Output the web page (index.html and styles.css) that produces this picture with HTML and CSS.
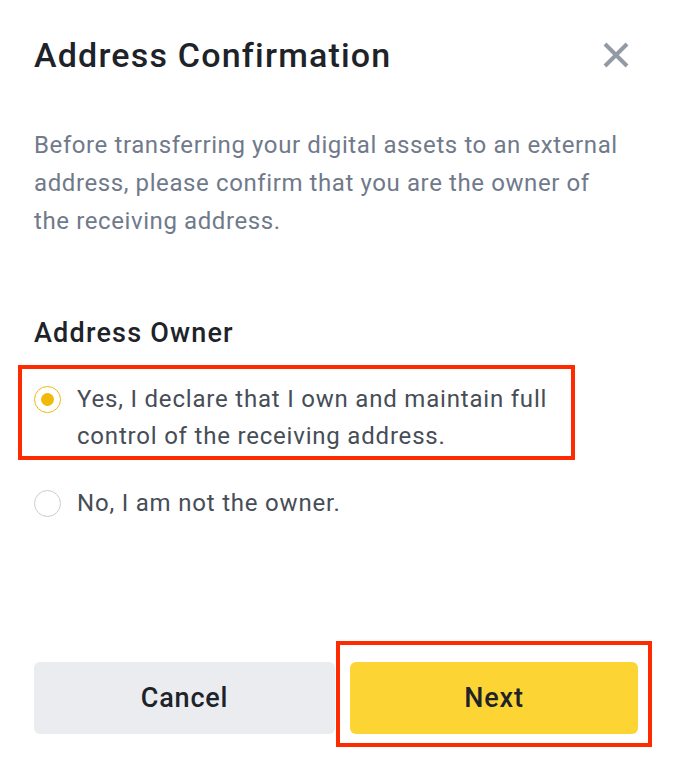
FILE: index.html
```html
<!DOCTYPE html>
<html lang="en">
<head>
<meta charset="utf-8">
<title>Address Confirmation</title>
<link rel="stylesheet" href="styles.css">
</head>
<body>
<div class="dialog">
  <div class="header">
    <h1 class="title">Address Confirmation</h1>
    <button class="close" aria-label="Close">
      <svg width="26" height="26" viewBox="0 0 26 26"><path d="M2 2 L24 24 M24 2 L2 24" stroke="#929AA5" stroke-width="4" fill="none"/></svg>
    </button>
  </div>
  <p class="desc">Before transferring your digital assets to an external address, please confirm that you are the owner of the receiving address.</p>
  <h2 class="section">Address Owner</h2>
  <div class="options">
    <label class="option selected">
      <span class="radio"><span class="dot"></span></span>
      <span class="option-text">Yes, I declare that I own and maintain full control of the receiving address.</span>
      <span class="mark mark-option"></span>
    </label>
    <label class="option">
      <span class="radio"></span>
      <span class="option-text">No, I am not the owner.</span>
    </label>
  </div>
  <div class="actions">
    <button class="btn btn-cancel">Cancel</button>
    <div class="next-wrap">
      <button class="btn btn-next">Next</button>
      <span class="mark mark-next"></span>
    </div>
  </div>
</div>
</body>
</html>
```
FILE: styles.css
```css
* { box-sizing: border-box; }
html, body { margin: 0; padding: 0; background: #fff; }
body { font-family: Roboto, "Noto Sans", Arial, sans-serif; color: #1E2329; }
.dialog { width: 678px; min-height: 768px; padding: 35px 40px 0 34px; }
.header { display: flex; justify-content: space-between; align-items: center; height: 40px; }
.title { margin: 0; font-size: 34px; font-weight: 500; line-height: 40px; letter-spacing: 1.2px; color: #1E2329; }
.close { border: 0; background: none; padding: 0; width: 26px; height: 26px; margin-right: 9px; display: flex; }
.desc { margin: 51px 0 0; font-size: 24px; line-height: 38px; letter-spacing: 0.6px; color: #707A8A; width: 590px; }
.section { margin: 76px 0 0; font-size: 27px; font-weight: 500; line-height: 34px; letter-spacing: 1.2px; color: #1E2329; }
.options { margin-top: 31px; display: flex; flex-direction: column; gap: 30px; }
.option { position: relative; display: flex; gap: 16px; align-items: flex-start; font-size: 24px; line-height: 37px; letter-spacing: 0.8px; color: #474D57; }
.option-text { width: 500px; }
.radio { flex: none; width: 27px; height: 27px; margin-top: 5px; border-radius: 50%; border: 1.5px solid #C9CCD1; display: flex; align-items: center; justify-content: center; }
.option.selected .radio { border-color: #F0B90B; }
.dot { width: 13px; height: 13px; border-radius: 50%; background: #F0B90B; }
.mark { position: absolute; border: 4.5px solid #FF2B00; pointer-events: none; }
.mark-option { left: -16px; top: -16px; width: 557px; height: 95px; }
.actions { margin-top: 140px; display: flex; gap: 15px; }
.btn { border: 0; border-radius: 6px; height: 72px; font-family: inherit; font-size: 27px; font-weight: 500; letter-spacing: 0.8px; color: #1E2329; }
.btn-cancel { width: 301px; background: #EAECEF; }
.next-wrap { position: relative; }
.btn-next { width: 288px; background: #FCD535; display: block; }
.mark-next { left: -14px; top: -21px; width: 316px; height: 106px; }
```
